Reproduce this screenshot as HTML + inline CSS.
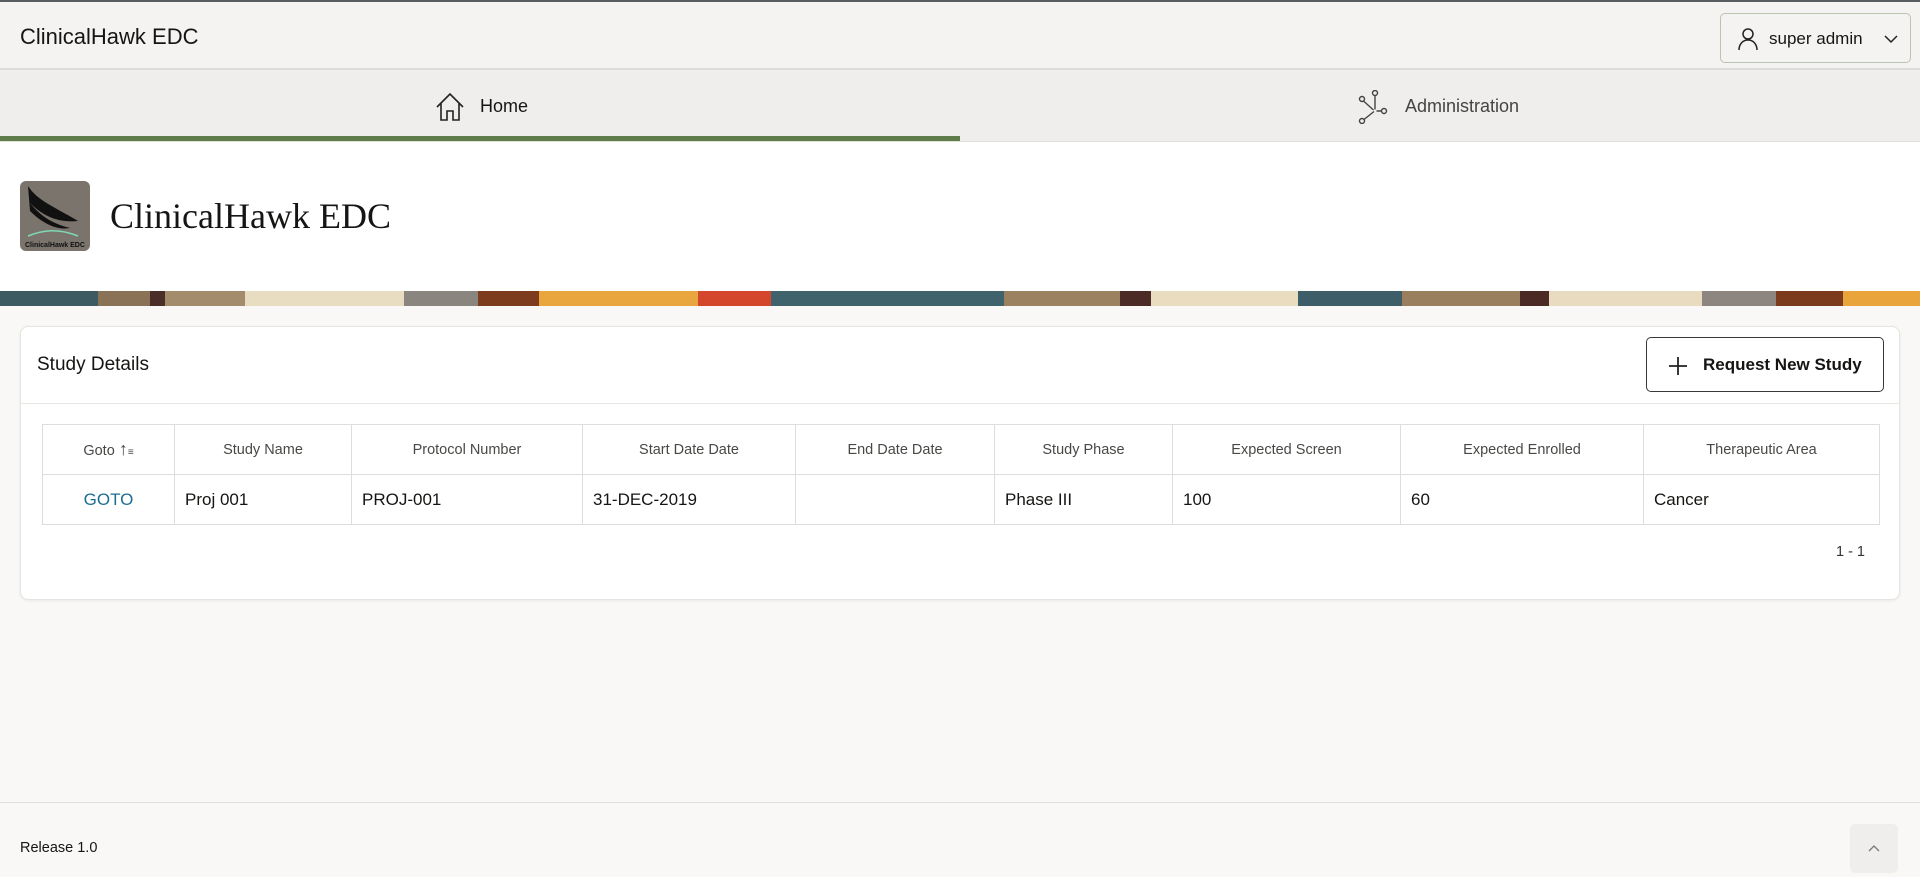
<!DOCTYPE html>
<html><head><meta charset="utf-8"><style>
*{box-sizing:border-box;margin:0;padding:0}
body{width:1920px;height:877px;background:#f9f8f6;font-family:"Liberation Sans",sans-serif;color:#161513;position:relative;overflow:hidden}
.top{position:absolute;left:0;top:0;width:1920px;height:70px;background:#f4f3f1;border-top:2px solid #5a5d60;border-bottom:2px solid #dedcda}
.top .t{position:absolute;left:20px;top:22px;font-size:22px}
.user{position:absolute;left:1720px;top:11px;width:191px;height:50px;border:1px solid #b9c4b0;border-radius:5px;background:#f4f3f1}
.user span{position:absolute;left:48px;top:15px;font-size:17px}
.tabs{position:absolute;top:70px;left:0;width:1920px;height:72px;background:#efeeec;border-bottom:1px solid #e2e0dd}
.tab{position:absolute;top:0;height:72px;width:960px}
.tab.on{border-bottom:5px solid #5e7d4b;height:71px}
.tab .l{position:absolute;top:26px;font-size:18px}
.hero{position:absolute;top:142px;left:0;width:1920px;height:149px;background:#fff}
.logo{position:absolute;left:20px;top:39px;width:70px;height:70px;border-radius:6px;background:#7b746d;overflow:hidden}
.hero h1{position:absolute;left:110px;top:53px;font:36px "Liberation Serif",serif;font-weight:normal}
.banner{position:absolute;top:291px;left:0;width:1920px;height:15px;background:linear-gradient(90deg,#3d5a63 0 98px,#8a7256 98px 150px,#4b2e28 150px 165px,#a38c6c 165px 245px,#e8dcc1 245px 404px,#8b8580 404px 478px,#7d3c1e 478px 539px,#e9a53e 539px 698px,#d5472d 698px 771px,#3f626c 771px 1004px,#9c8160 1004px 1120px,#4c2a26 1120px 1151px,#e9dcbf 1151px 1298px,#3d5d68 1298px 1402px,#9a7f5f 1402px 1520px,#4b2a25 1520px 1549px,#e8dbc0 1549px 1702px,#8c8580 1702px 1776px,#7d3b1d 1776px 1843px,#eaa43c 1843px)}
.card{position:absolute;left:20px;top:326px;width:1880px;height:274px;background:#fff;border:1px solid #e6e4e1;border-radius:8px;box-shadow:0 1px 3px rgba(0,0,0,.06)}
.card .hd{position:absolute;left:0;top:0;width:100%;height:77px;border-bottom:1px solid #e8e6e3}
.card .hd .ti{position:absolute;left:16px;top:27px;font-size:19px}
.btn{position:absolute;left:1625px;top:10px;width:238px;height:55px;border:1px solid #3a3835;border-radius:5px;background:#fff}
.btn span{position:absolute;left:56px;top:17px;font-size:17px;font-weight:bold}
table{position:absolute;left:21px;top:97px;border-collapse:collapse;width:1837px;table-layout:fixed}
td,th{border:1px solid #dfdddb;height:50px;font-size:17px;padding:0 10px;white-space:nowrap;overflow:hidden}
th{font-weight:normal;font-size:14.5px;color:#4a4845;text-align:center}
td a{color:#1e6d93;text-decoration:none}
.pg{position:absolute;right:34px;top:217px;font-size:14.5px;color:#333}
.foot{position:absolute;top:802px;left:0;width:1920px;height:75px;border-top:1px solid #e2e0dd}
.foot span{position:absolute;left:20px;top:37px;font-size:14.5px}
.up{position:absolute;left:1850px;top:21px;width:48px;height:49px;background:#efeeec;border-radius:5px}
</style></head><body>
<div class="top"><div class="t">ClinicalHawk EDC</div>
<div class="user"><svg style="position:absolute;left:16px;top:13px" width="22" height="24" viewBox="0 0 22 24" fill="none" stroke="#222" stroke-width="1.5"><circle cx="11" cy="7" r="5"/><path d="M2 23c0-6 4-10 9-10s9 4 9 10"/></svg><span>super admin</span><svg style="position:absolute;left:163px;top:21px" width="14" height="9" viewBox="0 0 14 9" fill="none" stroke="#222" stroke-width="1.5"><path d="M1 1l6 6 6-6"/></svg></div></div>
<div class="tabs">
<div class="tab on" style="left:0"><svg style="position:absolute;left:435px;top:22px" width="30" height="30" viewBox="0 0 30 30" fill="none" stroke="#222" stroke-width="1.6"><path d="M2 15L15 2l13 13M6 11v17h6v-9h6v9h6V11"/></svg><span class="l" style="left:480px">Home</span></div>
<div class="tab" style="left:960px"><svg style="position:absolute;left:398px;top:20px" width="30" height="34" viewBox="0 0 30 34" fill="none" stroke="#444" stroke-width="1.4"><circle cx="4" cy="9" r="2.5"/><circle cx="17" cy="3" r="2.5"/><circle cx="26" cy="21" r="2.5"/><circle cx="4" cy="31" r="2.5"/><path d="M5.5 11l10 9M17 5.5v14M18.5 21h5M6 29.5l10-8"/></svg><span class="l" style="left:445px;color:#444">Administration</span></div>
</div>
<div class="hero"><div class="logo"><svg width="70" height="70" viewBox="0 0 70 70"><path d="M8 5c10 15 25 20 50 35-20 2-35-5-48-18 10 12 20 20 40 25C35 50 20 40 10 30" fill="#111"/><path d="M8 55c15-6 30-8 50 0" stroke="#7fd8b5" fill="none" stroke-width="1.5"/><text x="5" y="66" font-size="7" font-family="Liberation Sans" fill="#111" font-weight="bold">ClinicalHawk EDC</text></svg></div><h1>ClinicalHawk EDC</h1></div>
<div class="banner"></div>
<div class="card">
<div class="hd"><div class="ti">Study Details</div><div class="btn"><svg style="position:absolute;left:22px;top:19px" width="18" height="18" viewBox="0 0 18 18" stroke="#222" stroke-width="1.8"><path d="M9 0v18M0 9h18"/></svg><span>Request New Study</span></div></div>
<table><colgroup><col style="width:132px"><col style="width:177px"><col style="width:231px"><col style="width:213px"><col style="width:199px"><col style="width:178px"><col style="width:228px"><col style="width:243px"><col style="width:236px"></colgroup>
<tr><th>Goto <span style="font-size:18px">↑</span><span style="font-size:10px">≡</span></th><th>Study Name</th><th>Protocol Number</th><th>Start Date Date</th><th>End Date Date</th><th>Study Phase</th><th>Expected Screen</th><th>Expected Enrolled</th><th>Therapeutic Area</th></tr>
<tr><td style="text-align:center"><a>GOTO</a></td><td>Proj 001</td><td>PROJ-001</td><td>31-DEC-2019</td><td></td><td>Phase III</td><td>100</td><td>60</td><td>Cancer</td></tr></table>
<div class="pg">1 - 1</div></div>
<div class="foot"><span>Release 1.0</span><div class="up"><svg style="position:absolute;left:18px;top:20px" width="12" height="8" viewBox="0 0 12 8" fill="none" stroke="#777" stroke-width="1.3"><path d="M1 7l5-5 5 5"/></svg></div></div>
</body></html>
